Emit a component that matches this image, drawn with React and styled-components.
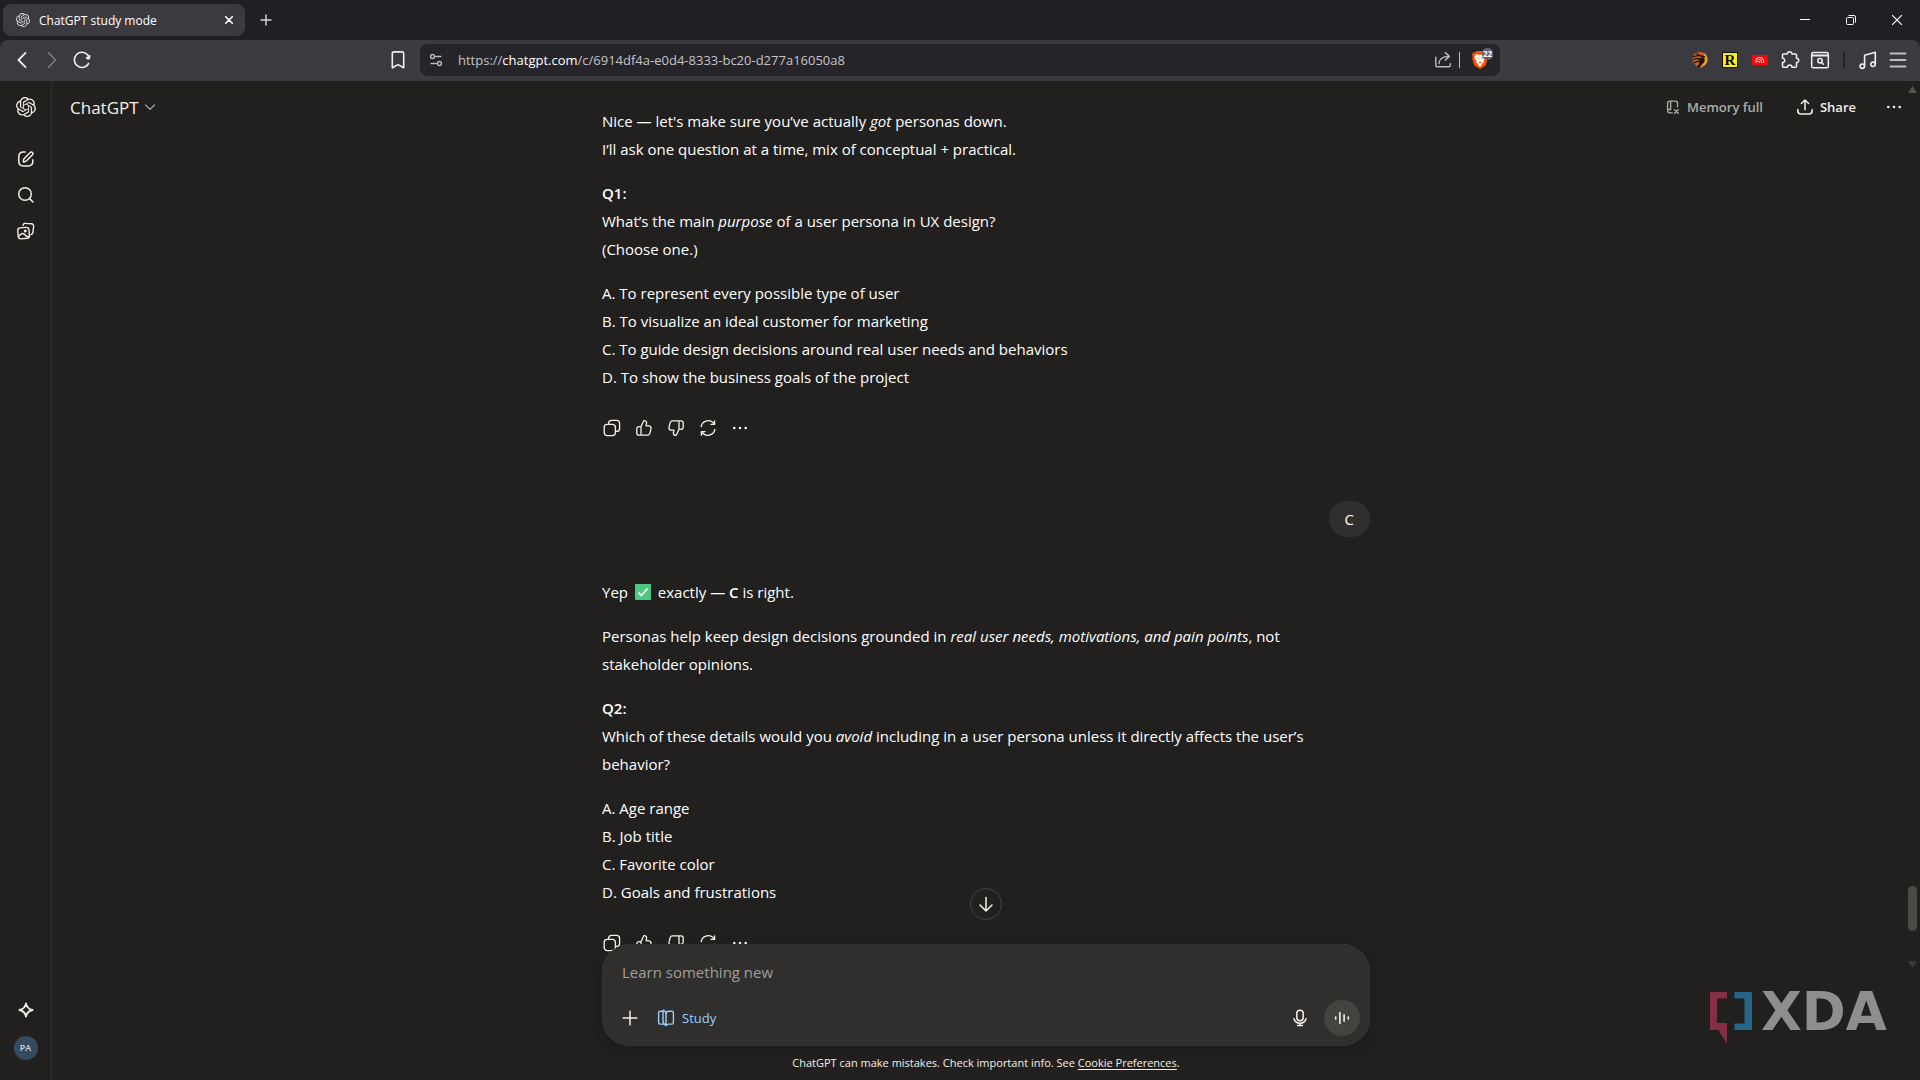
import React from "react";
import styled, { createGlobalStyle } from "styled-components";
import { SiOpenai } from "react-icons/si";

const GlobalStyle = createGlobalStyle`
  * {
    box-sizing: border-box;
  }

  body {
    margin: 0;
    background: #21201e;
    color: #ffffff;
    font-family: "Open Sans", "Noto Sans", sans-serif;
  }

  button, textarea, input {
    font-family: inherit;
    color: inherit;
    border: none;
    background: none;
    padding: 0;
    margin: 0;
  }

  button {
    cursor: pointer;
  }
`;

const Icon = ({ size = 20, weight = 1.33, children }) => (
  <svg
    width={size}
    height={size}
    viewBox="0 0 20 20"
    fill="none"
    stroke="currentColor"
    strokeWidth={weight}
    strokeLinecap="round"
    strokeLinejoin="round"
    aria-hidden="true"
  >
    {children}
  </svg>
);

const CopyIcon = () => (
  <Icon>
    <rect x="2.2" y="6.4" width="11.2" height="11.2" rx="3" />
    <path d="M6.6 6.2V5.4a3 3 0 0 1 3-3h5a3 3 0 0 1 3 3v5a3 3 0 0 1-3 3h-1" />
  </Icon>
);

const thumbPath =
  "M7 8.7 9.4 3.5c.3-.8 1-1.1 1.7-.8 1.1.4 1.7 1.4 1.5 2.5l-.5 2.6h2.6a2.4 2.4 0 0 1 2.3 3l-1.2 4.6a2.4 2.4 0 0 1-2.3 1.8H5a2.2 2.2 0 0 1-2.2-2.2v-4.1A2.2 2.2 0 0 1 5 8.700h2v8.4";

const ThumbUpIcon = () => (
  <Icon>
    <path d={thumbPath} />
  </Icon>
);

const ThumbDownIcon = () => (
  <Icon>
    <path d={thumbPath} transform="rotate(180 10 10)" />
  </Icon>
);

const RetryIcon = () => (
  <Icon>
    <path d="M3.2 8.6a7 7 0 0 1 12.9-2.5M16.6 2.8v3.6h-3.6" />
    <path d="M16.8 11.4a7 7 0 0 1-12.9 2.5M3.4 17.2v-3.6H7" />
  </Icon>
);

const DotsIcon = () => (
  <Icon>
    <g fill="currentColor" stroke="none">
      <circle cx="4.3" cy="10" r="1.3" />
      <circle cx="10" cy="10" r="1.3" />
      <circle cx="15.7" cy="10" r="1.3" />
    </g>
  </Icon>
);

const NewChatIcon = () => (
  <Icon weight={1.5}>
    <path d="M9.2 3H7.4C4.6 3 2.8 4.6 2.8 7.4v5.2c0 2.8 1.8 4.4 4.6 4.4h4.8c2.8 0 4.6-1.6 4.6-4.4v-1.8" />
    <path d="M8 9.7 14.2 3.5a1.6 1.6 0 0 1 2.3 2.3L10.3 12c-.6.6-1.5.8-2.9.9.1-1.5.1-2.6.6-3.2Z" />
  </Icon>
);

const SearchIcon = () => (
  <Icon weight={1.5}>
    <circle cx="9" cy="9" r="6.3" />
    <path d="m13.6 13.6 3.4 3.4" />
  </Icon>
);

const LibraryIcon = () => (
  <Icon weight={1.4}>
    <rect x="2" y="6.6" width="11.2" height="11" rx="2.6" transform="rotate(-5 7.6 12)" />
    <path d="M7 4.3c.3-1.5 1.2-2.2 2.7-2l5.6.5c1.7.2 2.5 1.2 2.3 2.8l-.7 5.7c-.2 1.3-.8 2-1.9 2.2" />
    <path d="M2.8 15.3c2.4-3.4 4.6-3.6 6.6-1 .9 1.1 1.8 1.7 3.6 1.2" />
    <circle cx="9.3" cy="10" r=".8" fill="currentColor" />
  </Icon>
);

const SparkleIcon = () => (
  <Icon weight={1.8}>
    <path d="M10 3.4c.7 4 2.6 5.900 6.600 6.600-4 .7-5.900 2.600-6.600 6.600-.7-4-2.600-5.900-6.600-6.600 4-.7 5.900-2.600 6.600-6.600Z" />
  </Icon>
);

const StudyIcon = () => (
  <Icon weight={1.4}>
    <path d="M7 3.3H4.2A1.6 1.6 0 0 0 2.6 4.900v9.600a1.600 1.600 0 0 0 1.600 1.600h3.300c1.200 0 1.900.5 2.500 1.500.6-1 1.300-1.500 2.500-1.500h3.300a1.600 1.600 0 0 0 1.600-1.600V4.900a1.600 1.600 0 0 0-1.600-1.600h-3c-1.600 0-2.800 1-2.800 2.600v11.500" />
    <path d="M10 17.200c-1.800-.8-3-2.300-3-4.300V3.200c0-.9.6-1.200 1.300-.7C9.400 3.300 10 4.400 10 5.900" />
  </Icon>
);

const MicIcon = () => (
  <Icon weight={1.5}>
    <rect x="6.8" y="2.2" width="6.4" height="10.6" rx="3.2" />
    <path d="M4 10.8c.8 2.9 3 4.4 6 4.4s5.200-1.5 6-4.4M10 15.4v2.2M7.6 17.6h4.8" />
  </Icon>
);

const VoiceIcon = () => (
  <Icon weight={1.6}>
    <path d="M3.7 9v2M7.9 4.6v10.8M12.1 6.8v6.4M16.3 9v2" />
  </Icon>
);

const MemoryIcon = () => (
  <Icon size={18} weight={1.5}>
    <path d="M9.3 16.5H6.500A2.500 2.500 0 0 1 4 14V6a2.500 2.500 0 0 1 2.500-2.500h6.300A2.300 2.300 0 0 1 15 5.800v4M7.400 3.600v9.200H4.600" />
    <path d="m11.800 13 4 4M15.800 13l-4 4" />
  </Icon>
);

const ShareIcon = () => (
  <Icon weight={1.5}>
    <path d="M10 12.8V3.2M6.4 6.500 10 3l3.600 3.500M2.800 12.400v1.400c0 2 1.200 3.200 3.200 3.200h8c2 0 3.200-1.200 3.200-3.200v-1.400" />
  </Icon>
);

const ShieldIcon = () => (
  <ShieldWrap>
    <svg width="16" height="18" viewBox="0 0 16 18" aria-hidden="true">
      <path d="M4.600 0h6.800l1.400 1.500 1.700-.2L16 3.800l-.7 2 .5 1.600-2.200 7.200L8 18l-5.600-3.400L.2 7.400l.5-1.600-.7-2 1.500-2.500 1.700.2Z" fill="#ff5000" />
      <path d="m4 3.300 4 .6 4-.6 1.600 2.800-.9 2.300-1.200 1 .2 2.100L9.600 13l.2 1.200L8 15.500l-1.800-1.300.2-1.200-2.100-1.500.2-2.100-1.200-1-.9-2.300Z" fill="#ffffff" />
      <path d="m4.500 6.500 2.200.4-.5 1.200ZM11.500 6.500l-2.200.4.500 1.200ZM6.500 11.300 8 10.600l1.500.7L8 12.400Z" fill="#ff5000" />
    </svg>
    <Badge>22</Badge>
  </ShieldWrap>
);

const BallIcon = () => (
  <svg width="18" height="18" viewBox="0 0 18 18" aria-hidden="true">
    <path d="M9 1c4.500 0 7.500 3 7.500 7 0 4.500-3.500 7-7.500 9.200C5 15 1.500 12 1.500 8 1.500 4 4.500 1 9 1Z" fill="#d0601c" />
    <path d="M13 2.200c4.500 3 4.500 8.500 1 11.800L9 17.200c1-3 5-4 4.500-8.500Z" fill="#e9a53c" />
    <path d="M2 6c4-2 8-2 12 0M1.800 9C5 7.300 8 7.300 10 8M3 12c2-1.600 4-2 6-1.500M5.500 2.500C8 4.500 12 5 13.500 9" stroke="#2a1614" strokeWidth="1.400" fill="none" />
    <path d="M8 7.500c3-1.500 6 0 5.500 3-.4 1.800-2.800 2-3.500 4l-1.300 2.700L6 15.300c2-1.500 3-3 2-7.800Z" fill="#1d1319" />
  </svg>
);

const CastIcon = () => (
  <svg width="16" height="16" viewBox="0 0 16 16" aria-hidden="true">
    <rect x="0" y="3" width="16" height="10" rx="2" fill="#ff0505" />
    <g stroke="#ffd5d5" strokeWidth="1.1" fill="none" strokeLinecap="round">
      <path d="M4 10.500C3.600 7.500 5 5.500 7.200 5.500c2.800 0 4.600 2 4.600 5" />
      <path d="M6.500 7.500c2-.3 3.200 1 3.200 3M5.500 9.500c1.200-.6 2.200 0 2.200 1" />
    </g>
  </svg>
);

const XdaLogo = () => (
  <LogoDrawing width="178" height="52" viewBox="0 0 178 52" role="img" aria-label="XDA">
    <path d="M0 0h17v6.5H7v24.5h10v21L8.5 38H0Z" fill="#842f43" />
    <path d="M24.500 0H42v38H24.500v-6.500h10v-25h-10Z" fill="#256688" />
    <WordMark x="51" y="38">XDA</WordMark>
  </LogoDrawing>
);

const ReplyActions = () => (
  <Actions>
    <IconButton aria-label="Copy"><CopyIcon /></IconButton>
    <IconButton aria-label="Good response"><ThumbUpIcon /></IconButton>
    <IconButton aria-label="Bad response"><ThumbDownIcon /></IconButton>
    <IconButton aria-label="Try again"><RetryIcon /></IconButton>
    <IconButton aria-label="More actions"><DotsIcon /></IconButton>
  </Actions>
);

const BrowserChrome = () => (
  <Chrome>
    <TabStrip>
      <Tab>
        <SiOpenai size={14} color="#d6d6d8" />
        <TabTitle>ChatGPT study mode</TabTitle>
        <TabClose aria-label="Close tab">
          <Icon size={12} weight={2.6}><path d="m4.500 4.500 11 11M15.500 4.500l-11 11" /></Icon>
        </TabClose>
      </Tab>
      <NewTab aria-label="New tab">
        <Icon size={12} weight={2.4}><path d="M10 1.7v16.6M1.7 10h16.6" /></Icon>
      </NewTab>
      <WindowButtons>
        <WindowButton aria-label="Minimize">
          <svg width="10" height="10"><path d="M0 4.500h10" stroke="#fff" /></svg>
        </WindowButton>
        <WindowButton aria-label="Restore">
          <svg width="10" height="10" fill="none" stroke="#fff">
            <rect x=".5" y="2.5" width="7" height="7" rx="1" />
            <path d="M2.500.5H8A1.500 1.500 0 0 1 9.500 2v5.500" />
          </svg>
        </WindowButton>
        <WindowButton aria-label="Close">
          <svg width="10" height="10"><path d="m0 0 10 10M10 0 0 10" stroke="#fff" strokeWidth="1.2" /></svg>
        </WindowButton>
      </WindowButtons>
    </TabStrip>
    <Toolbar>
      <ToolGroup>
        <ToolButton aria-label="Back">
          <Icon weight={1.8}><path d="m13.500 2.800-7 7.200 7 7.200" /></Icon>
        </ToolButton>
        <ToolButton aria-label="Forward" $dim>
          <Icon weight={1.6}><path d="m6.500 2.800 7 7.200-7 7.200" /></Icon>
        </ToolButton>
        <ToolButton aria-label="Reload">
          <Icon weight={1.6}>
            <path d="M16 5.300a7.600 7.600 0 1 0 .6 8.200" />
            <circle cx="16.2" cy="8" r="1.7" fill="currentColor" stroke="none" />
            <path d="M14.500 8h3V5.500" fill="currentColor" />
          </Icon>
        </ToolButton>
        <Spacer />
        <ToolButton aria-label="Bookmark">
          <Icon weight={1.6}>
            <path d="M4.300 3.500A1.600 1.600 0 0 1 5.900 1.900h8.200a1.600 1.600 0 0 1 1.600 1.600v14.300L10 14.600l-5.700 3.200Z" />
          </Icon>
        </ToolButton>
      </ToolGroup>
      <AddressBar>
        <SmallButton aria-label="Site settings">
          <Icon size={14} weight={2}>
            <circle cx="5" cy="5" r="2.8" />
            <path d="M9.500 5H17" />
            <circle cx="15" cy="15" r="2.8" />
            <path d="M3 15h7.500" />
          </Icon>
        </SmallButton>
        <Url>
          https://<b>chatgpt.com</b>/c/6914df4a-e0d4-8333-bc20-d277a16050a8
        </Url>
        <SmallButton aria-label="Share page">
          <Icon size={18} weight={1.6}>
            <path d="M2 7v9a1.500 1.500 0 0 0 1.500 1.500h13A1.500 1.500 0 0 0 18 16v-2" />
            <path d="M5.500 14c.5-5 4-8 11-8M12.500 1.800 17 6l-4.500 4.200" />
          </Icon>
        </SmallButton>
        <AddressRule />
        <SmallButton aria-label="Shields">
          <ShieldIcon />
        </SmallButton>
      </AddressBar>
      <ToolGroup $end>
        <ToolButton aria-label="Extension"><BallIcon /></ToolButton>
        <ToolButton aria-label="Reader extension"><ReaderTile>R</ReaderTile></ToolButton>
        <ToolButton aria-label="Cast extension"><CastIcon /></ToolButton>
        <ToolButton aria-label="Extensions">
          <Icon weight={1.5}>
            <path d="M3.500 4h3.800a2.300 2.300 0 1 1 4.600 0h3.600a1 1 0 0 1 1 1v3.200a2.200 2.200 0 1 1 0 4.400v3.600a1 1 0 0 1-1 1H12a2.300 2.300 0 0 0-4.600 0H3.500a1 1 0 0 1-1-1v-3.600a2.200 2.200 0 1 0 0-4.400V5a1 1 0 0 1 1-1Z" />
          </Icon>
        </ToolButton>
        <ToolButton aria-label="Search tabs">
          <Icon weight={1.5}>
            <rect x="1.7" y="2.4" width="16.6" height="15.4" rx="1.6" />
            <path d="M2 5.500h16" strokeWidth="2" />
            <circle cx="10" cy="10.8" r="2.2" />
            <path d="m11.800 12.600 1.600 1.600" />
          </Icon>
        </ToolButton>
        <ToolRule />
        <ToolButton aria-label="Media">
          <Icon weight={1.6}>
            <circle cx="4.3" cy="16.2" r="2.2" />
            <circle cx="15" cy="14.3" r="2.2" />
            <path d="M6.600 16V5.200l10.700-3V14" />
          </Icon>
        </ToolButton>
        <ToolButton aria-label="Menu">
          <Icon weight={1.8}><path d="M2.500 3.500h15M2.500 10h15M2.500 16.500h15" stroke="#bdbdc1" /></Icon>
        </ToolButton>
      </ToolGroup>
    </Toolbar>
  </Chrome>
);

const App = () => (
  <Page>
    <GlobalStyle />
    <BrowserChrome />
    <Workspace>
      <Sidebar>
        <HomeLink href="#home" aria-label="ChatGPT">
          <SiOpenai size={20} />
        </HomeLink>
        <RailButton aria-label="New chat"><NewChatIcon /></RailButton>
        <RailButton aria-label="Search chats"><SearchIcon /></RailButton>
        <RailButton aria-label="Library"><LibraryIcon /></RailButton>
        <RailFooter>
          <RailButton aria-label="Upgrade"><SparkleIcon /></RailButton>
          <RailButton aria-label="Profile"><Avatar>PA</Avatar></RailButton>
        </RailFooter>
      </Sidebar>

      <Main>
        <Thread>
          <Reply>
            <p>
              Nice — let's make sure you’ve actually <em>got</em> personas down.
              <br />
              I’ll ask one question at a time, mix of conceptual + practical.
            </p>
            <p>
              <strong>Q1:</strong>
              <br />
              What’s the main <em>purpose</em> of a user persona in UX design?
              <br />
              (Choose one.)
            </p>
            <p>
              A. To represent every possible type of user
              <br />
              B. To visualize an ideal customer for marketing
              <br />
              C. To guide design decisions around real user needs and behaviors
              <br />
              D. To show the business goals of the project
            </p>
          </Reply>
          <ReplyActions />

          <Bubble>C</Bubble>

          <Reply>
            <p>
              Yep{" "}
              <CheckMark viewBox="0 0 16 16" role="img" aria-label="check mark">
                <rect width="16" height="16" rx="1" fill="#4cc880" />
                <path d="m3.500 8.500 3 3 6-7" fill="none" stroke="#fff" strokeWidth="1.8" />
              </CheckMark>{" "}
              exactly — <strong>C</strong> is right.
            </p>
            <p>
              Personas help keep design decisions grounded in{" "}
              <em>real user needs, motivations, and pain points</em>, not
              <br />
              stakeholder opinions.
            </p>
            <p>
              <strong>Q2:</strong>
              <br />
              Which of these details would you <em>avoid</em> including in a user
              persona unless it directly affects the user’s
              <br />
              behavior?
            </p>
            <p>
              A. Age range
              <br />
              B. Job title
              <br />
              C. Favorite color
              <br />
              D. Goals and frustrations
            </p>
          </Reply>
          <ReplyActions />
        </Thread>

        <Header>
          <ModelButton>
            ChatGPT
            <Icon size={14} weight={1.7}><path d="m3.500 7 6.500 6.500L16.500 7" stroke="#b3b0aa" /></Icon>
          </ModelButton>
          <Spacer />
          <HeaderButton $muted>
            <MemoryIcon />
            Memory full
          </HeaderButton>
          <HeaderButton>
            <ShareIcon />
            Share
          </HeaderButton>
          <RoundButton aria-label="Conversation options"><DotsIcon /></RoundButton>
        </Header>

        <Dock>
          <ScrollDown aria-label="Scroll to bottom">
            <Icon weight={1.5}><path d="M10 3.500v13M4 11l6 6 6-6" /></Icon>
          </ScrollDown>
          <Composer>
            <Prompt rows="1" placeholder="Learn something new" aria-label="Message" />
            <ComposerRow>
              <RoundButton type="button" aria-label="Add files">
                <Icon weight={1.5}><path d="M10 3.200v13.600M3.200 10h13.600" /></Icon>
              </RoundButton>
              <StudyButton type="button">
                <StudyIcon />
                Study
              </StudyButton>
              <Spacer />
              <RoundButton type="button" aria-label="Dictate"><MicIcon /></RoundButton>
              <VoiceButton type="button" aria-label="Voice mode"><VoiceIcon /></VoiceButton>
            </ComposerRow>
          </Composer>
          <Disclaimer>
            ChatGPT can make mistakes. Check important info. See{" "}
            <a href="#cookies">Cookie Preferences</a>.
          </Disclaimer>
        </Dock>

        <ScrollRail aria-hidden="true">
          <svg width="9" height="7"><path d="M4.500 0 9 7H0Z" fill="#555350" /></svg>
          <Spacer />
          <ScrollThumb />
          <svg width="9" height="7"><path d="M0 0h9L4.500 7Z" fill="#3c3a38" /></svg>
        </ScrollRail>
        <Watermark>
          <XdaLogo />
        </Watermark>
      </Main>
    </Workspace>
  </Page>
);

// Browser window
const Page = styled.div`
  height: 100vh;
  display: flex;
  flex-direction: column;
  overflow: hidden;
`;

const Spacer = styled.div`
  flex: 1;
`;

const Chrome = styled.div`
  background: #201f25;
`;

const TabStrip = styled.div`
  display: flex;
  align-items: center;
  height: 40px;
  padding-left: 3px;
`;

const Tab = styled.div`
  display: flex;
  align-items: center;
  gap: 9px;
  width: 242px;
  height: 32px;
  padding: 0 8px 0 13px;
  border-radius: 8px;
  background: #3b3a3f;
`;

const TabTitle = styled.span`
  flex: 1;
  font-size: 12px;
  white-space: nowrap;
`;

const TabClose = styled.button`
  display: grid;
  place-items: center;
  width: 16px;
  height: 16px;
`;

const NewTab = styled.button`
  display: grid;
  place-items: center;
  width: 28px;
  height: 28px;
  margin-left: 7px;
  color: #d6d6d8;
`;

const WindowButtons = styled.div`
  display: flex;
  align-self: stretch;
  margin-left: auto;
`;

const WindowButton = styled.button`
  display: grid;
  place-items: center;
  width: 46px;
`;

const Toolbar = styled.div`
  display: grid;
  grid-template-columns: 1fr minmax(0, 1080px) 1fr;
  align-items: center;
  height: 41px;
  padding-bottom: 1px;
  border-radius: 8px 8px 0 0;
  background: #3b3a3f;
`;

const ToolGroup = styled.div`
  display: flex;
  align-items: center;
  justify-content: ${({ $end }) => ($end ? "flex-end" : "flex-start")};
  padding: 0 7px;
`;

const ToolButton = styled.button`
  display: grid;
  place-items: center;
  width: 30px;
  height: 30px;
  color: ${({ $dim }) => ($dim ? "#7e7d82" : "#eeeef0")};
`;

const ToolRule = styled.div`
  width: 2px;
  height: 16px;
  margin: 0 8px;
  background: #25242a;
`;

const AddressBar = styled.div`
  display: flex;
  align-items: center;
  height: 32px;
  padding: 0 4px;
  border-radius: 8px;
  background: #252429;
`;

const SmallButton = styled.button`
  display: grid;
  place-items: center;
  width: 24px;
  height: 24px;
  color: #b9b9bf;

  &:last-child {
    width: 32px;
  }
`;

const Url = styled.span`
  flex: 1;
  padding-left: 10px;
  font-size: 13px;
  color: #c3c3c8;
  white-space: nowrap;

  b {
    font-weight: 400;
    color: #ffffff;
  }
`;

const AddressRule = styled.div`
  width: 1px;
  height: 16px;
  margin: 0 4px;
  background: #b9b9bf;
`;

const ShieldWrap = styled.span`
  position: relative;
  display: grid;
`;

const Badge = styled.span`
  position: absolute;
  top: -3px;
  left: 10px;
  padding: 0 1px;
  border-radius: 5px;
  background: #5f6070;
  color: #ffffff;
  font-size: 8px;
  font-weight: 700;
  line-height: 12px;
`;

const ReaderTile = styled.span`
  width: 16px;
  height: 16px;
  border: 1px solid #111111;
  background: #fff000;
  color: #000000;
  font-family: "Liberation Serif", serif;
  font-size: 15px;
  font-weight: 700;
  line-height: 14px;
  text-align: center;
`;

// Chat page
const Workspace = styled.div`
  flex: 1;
  display: flex;
  min-height: 0;
`;

const Sidebar = styled.nav`
  display: flex;
  flex-direction: column;
  align-items: center;
  width: 52px;
  padding-bottom: 14px;
  border-right: 1px solid #302f2c;
  color: #f3efe6;
`;

const HomeLink = styled.a`
  display: grid;
  place-items: center;
  width: 36px;
  height: 52px;
  margin-bottom: 8px;
  color: inherit;
`;

const RailButton = styled.button`
  display: grid;
  place-items: center;
  width: 36px;
  height: 36px;
`;

const RailFooter = styled.div`
  display: grid;
  gap: 2px;
  margin-top: auto;
`;

const Avatar = styled.span`
  width: 24px;
  height: 24px;
  border-radius: 50%;
  background: #344b60;
  color: #d0d5da;
  font-size: 9px;
  font-weight: 600;
  line-height: 24px;
`;

const Main = styled.main`
  position: relative;
  flex: 1;
  min-width: 0;
  overflow: hidden;
`;

const Header = styled.header`
  position: absolute;
  inset: 0 0 auto;
  display: flex;
  align-items: center;
  gap: 8px;
  height: 52px;
  padding: 0 8px;
  color: #f3efe6;
`;

const ModelButton = styled.button`
  display: flex;
  align-items: center;
  gap: 4px;
  height: 36px;
  padding: 0 10px;
  font-size: 17px;
`;

const HeaderButton = styled.button`
  display: flex;
  align-items: center;
  gap: 5px;
  height: 36px;
  padding: 0 12px;
  font-size: 13px;
  font-weight: 600;
  color: ${({ $muted }) => ($muted ? "#aeaba4" : "#f3efe6")};
`;

const RoundButton = styled.button`
  display: grid;
  place-items: center;
  width: 36px;
  height: 36px;
  border-radius: 50%;
`;

const Thread = styled.div`
  display: flex;
  flex-direction: column;
  width: 100%;
  max-width: 768px;
  margin: 0 auto;
  padding-top: 26px;
`;

const Reply = styled.article`
  font-size: 15px;
  line-height: 28px;

  p {
    margin: 0 0 16px;
  }

  strong {
    font-weight: 600;
  }
`;

const CheckMark = styled.svg`
  width: 16px;
  height: 16px;
  margin: 0 3px;
  vertical-align: -2px;
`;

const Actions = styled.div`
  display: flex;
  margin: 5px 0 0 -6px;
  color: #f3efe6;
`;

const IconButton = styled.button`
  display: grid;
  place-items: center;
  width: 32px;
  height: 32px;
`;

const Bubble = styled.div`
  align-self: flex-end;
  margin: 57px 0 41px;
  padding: 6px 16px;
  border-radius: 18px;
  background: #302f2d;
  font-size: 15px;
  line-height: 24px;
`;

const Dock = styled.div`
  position: absolute;
  inset: auto 0 0;
  display: flex;
  flex-direction: column;
  align-items: center;
`;

const ScrollDown = styled.button`
  display: grid;
  place-items: center;
  width: 32px;
  height: 32px;
  margin-bottom: 24px;
  border: 1px solid #444340;
  border-radius: 50%;
  background: #21201e;
  color: #f3efe6;
`;

const Composer = styled.form`
  width: 100%;
  max-width: 768px;
  padding: 10px;
  border-radius: 28px;
  background: #302f2d;
  box-shadow: 0 4px 12px rgba(0, 0, 0, 0.15), inset 0 0 1px rgba(255, 255, 255, 0.2);
  color: #f3efe6;
`;

const Prompt = styled.textarea`
  display: block;
  width: 100%;
  height: 46px;
  padding: 6px 10px 16px;
  outline: none;
  resize: none;
  font-size: 15px;
  line-height: 24px;

  &::placeholder {
    color: #a19e98;
  }
`;

const ComposerRow = styled.div`
  display: flex;
  align-items: center;
`;

const StudyButton = styled.button`
  display: flex;
  align-items: center;
  gap: 6px;
  height: 36px;
  padding: 0 8px;
  font-size: 13px;
  color: #99ceff;
`;

const VoiceButton = styled(RoundButton)`
  margin-left: 6px;
  background: #444340;
`;

const Disclaimer = styled.p`
  margin: 0;
  height: 34px;
  font-size: 11px;
  line-height: 34px;
  color: #f3efe6;

  a {
    color: inherit;
    text-underline-offset: 2px;
  }
`;

const ScrollRail = styled.div`
  position: absolute;
  top: 5px;
  right: 3px;
  bottom: 112px;
  display: flex;
  flex-direction: column;
  align-items: center;
`;

const ScrollThumb = styled.div`
  width: 9px;
  height: 45px;
  margin-bottom: 30px;
  border-radius: 5px;
  background: #4a4946;
`;

const Watermark = styled.div`
  position: absolute;
  right: 32px;
  bottom: 36px;
  display: flex;
`;

const LogoDrawing = styled.svg`
  overflow: visible;
`;

const WordMark = styled.text`
  fill: #8e8e8e;
  font-family: "DejaVu Sans", sans-serif;
  font-size: 53px;
  font-weight: 700;
`;

export default App;
